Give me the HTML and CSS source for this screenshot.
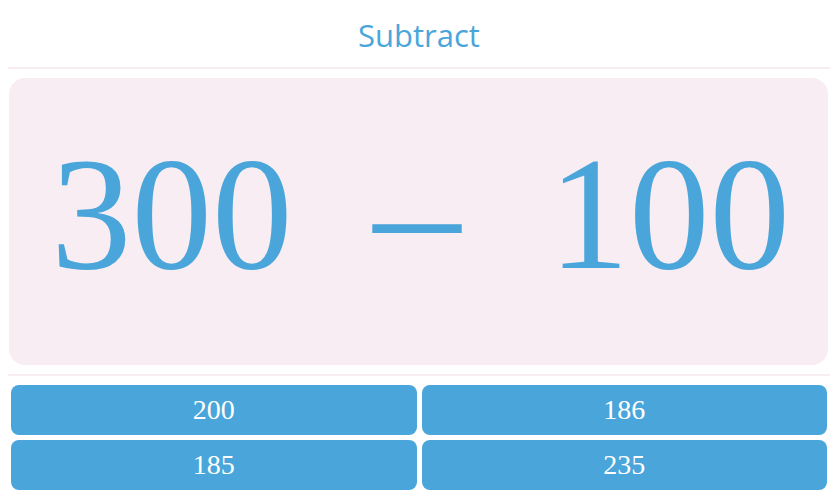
FILE: index.html
```html
<!DOCTYPE html>
<html lang="en">
<head>
    <meta charset="UTF-8">
    <meta name="viewport" content="width=device-width, initial-scale=1.0">
    <title>Subtract</title>
    <link rel="stylesheet" href="styles.css">
</head>
<body>
<div class="app">
    <div class="title">Subtract</div>
    <div class="question">
        <span class="num">300</span>
        <span class="op">&ndash;</span>
        <span class="num">100</span>
    </div>
    <div class="answers">
        <button class="answer">200</button>
        <button class="answer">186</button>
        <button class="answer">185</button>
        <button class="answer">235</button>
    </div>
</div>
</body>
</html>
```

FILE: styles.css
```css
body {
    margin: 0;
    padding: 0 8px;
    background: #fff;
}
.app {
    width: 822px;
}
.title {
    font-family: "Open Sans", sans-serif;
    font-size: 31px;
    color: #4aa6da;
    text-align: center;
    height: 67px;
    line-height: 70px;
    border-bottom: 2px solid #f8edf3;
}
.question {
    margin: 9px 2px 0 1px;
    height: 287px;
    background: #f8edf3;
    border-radius: 16px;
    display: flex;
    align-items: center;
    justify-content: center;
    font-family: "Liberation Serif", serif;
    font-size: 161px;
    color: #4aa6da;
    padding-bottom: 14px;
    padding-left: 4px;
    box-sizing: border-box;
}
.op {
    font-size: 174px;
    line-height: 1;
    margin: 0 88px 0 81px;
    position: relative;
    top: -4px;
}
.answers {
    margin-top: 9px;
    border-top: 2px solid #f8edf3;
    padding: 9px 3px 0 3px;
    display: grid;
    grid-template-columns: 1fr 1fr;
    gap: 5px;
}
.answer {
    height: 50px;
    border: none;
    border-radius: 8px;
    background: #4aa6da;
    color: #fff;
    font-family: "Liberation Serif", serif;
    font-size: 28px;
    padding: 0;
}
```
